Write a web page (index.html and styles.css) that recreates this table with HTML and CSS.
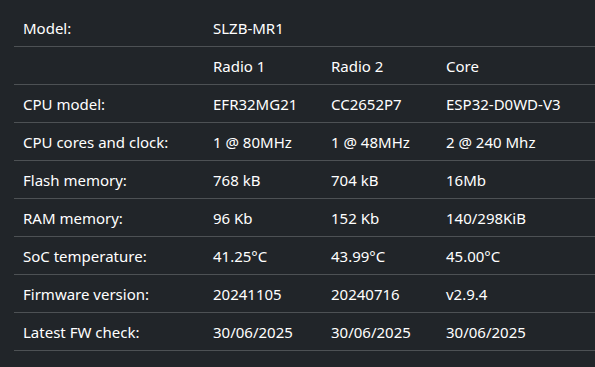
FILE: index.html
```html
<!DOCTYPE html>
<html lang="en">
<head>
<meta charset="utf-8">
<title>Device info</title>
<link rel="stylesheet" href="styles.css">
</head>
<body>
<main class="panel">
<table class="info">
<colgroup>
<col class="c-label"><col class="c-r1"><col class="c-r2"><col class="c-core">
</colgroup>
<tbody>
<tr><td>Model:</td><td>SLZB-MR1</td><td></td><td></td></tr>
<tr><td></td><td>Radio 1</td><td>Radio 2</td><td>Core</td></tr>
<tr><td>CPU model:</td><td>EFR32MG21</td><td>CC2652P7</td><td>ESP32-D0WD-V3</td></tr>
<tr><td>CPU cores and clock:</td><td>1 @ 80MHz</td><td>1 @ 48MHz</td><td>2 @ 240 Mhz</td></tr>
<tr><td>Flash memory:</td><td>768 kB</td><td>704 kB</td><td>16Mb</td></tr>
<tr><td>RAM memory:</td><td>96 Kb</td><td>152 Kb</td><td>140/298KiB</td></tr>
<tr><td>SoC temperature:</td><td>41.25°C</td><td>43.99°C</td><td>45.00°C</td></tr>
<tr><td>Firmware version:</td><td>20241105</td><td>20240716</td><td>v2.9.4</td></tr>
<tr><td>Latest FW check:</td><td>30/06/2025</td><td>30/06/2025</td><td>30/06/2025</td></tr>
</tbody>
</table>
</main>
</body>
</html>
```
FILE: styles.css
```css
html, body {
  margin: 0;
  padding: 0;
  background: #212529;
}
body {
  font-family: "Noto Sans", "Open Sans", sans-serif;
  font-size: 15px;
  color: #ffffff;
}
.panel {
  padding: 9px 0 0 14px;
}
.info {
  width: 581px;
  border-collapse: collapse;
  table-layout: fixed;
}
.c-label { width: 190px; }
.c-r1 { width: 118px; }
.c-r2 { width: 115px; }
.c-core { width: 158px; }
.info td {
  padding: 9px 8px 7px 9px;
  line-height: 21px;
  border-bottom: 1px solid #4d5154;
  white-space: nowrap;
  text-align: left;
  vertical-align: middle;
}
```
